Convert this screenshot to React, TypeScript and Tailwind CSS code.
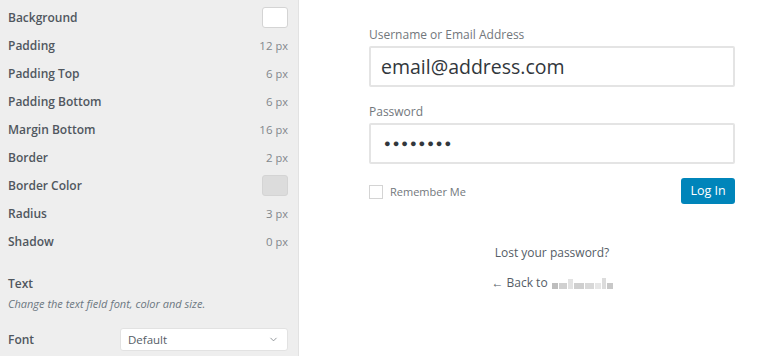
import { ChevronDown } from 'lucide-react';

const rows: { label: string; value?: string; swatch?: string }[] = [
  { label: 'Background', swatch: 'bg-white' },
  { label: 'Padding', value: '12' },
  { label: 'Padding Top', value: '6' },
  { label: 'Padding Bottom', value: '6' },
  { label: 'Margin Bottom', value: '16' },
  { label: 'Border', value: '2' },
  { label: 'Border Color', swatch: 'bg-[#dcdcdc]' },
  { label: 'Radius', value: '3' },
  { label: 'Shadow', value: '0' },
];

function SettingsPanel() {
  return (
    <div className="w-[299px] shrink-0 bg-[#eeeeee] border-r border-[#e2e2e2] pl-2 pr-[10px] pt-[7px]">
      {rows.map((r) => (
        <div key={r.label} className="flex h-[28px] items-start justify-between">
          <span className="text-[12px] font-semibold leading-[21px] text-[#50575e]">{r.label}</span>
          {r.swatch ? (
            <span className={`h-[21px] w-[26px] rounded-[3px] border border-[#d4d4d4] ${r.swatch}`} />
          ) : (
            <span className="text-[11.5px] leading-[21px] text-[#82878c]">
              {r.value} <span className="text-[11px]">px</span>
            </span>
          )}
        </div>
      ))}
      <div className="mt-[17px] text-[12px] font-semibold leading-[16px] text-[#50575e]">Text</div>
      <div className="mt-[4px] text-[11px] italic leading-[16px] text-[#6c7781]">
        Change the text field font, color and size.
      </div>
      <div className="mt-[16px] flex items-center justify-between">
        <span className="text-[12px] font-semibold text-[#50575e]">Font</span>
        <div className="flex h-[23px] w-[168px] items-center justify-between rounded-[3px] border border-[#e2e2e2] bg-white pl-[7px] pr-[8px]">
          <span className="text-[11.5px] text-[#555d66]">Default</span>
          <ChevronDown size={11} strokeWidth={2} className="text-[#8a8f94]" />
        </div>
      </div>
    </div>
  );
}

function LoginForm() {
  return (
    <div className="flex-1 bg-white pl-[70px] pr-[33px] pt-[27px]">
      <label className="block text-[12px] leading-[16px] text-[#72777c]">Username or Email Address</label>
      <div className="mt-[3px] flex h-[41px] items-center rounded-[2px] border-2 border-[#e4e4e4] px-[10px] text-[19.5px] text-[#32373c]">
        email@address.com
      </div>
      <label className="mt-[17px] block text-[12px] leading-[16px] text-[#72777c]">Password</label>
      <div className="mt-[3px] flex h-[41px] items-center rounded-[2px] border-2 border-[#e4e4e4] px-[13px] text-[11px] tracking-[2px] text-[#32373c]">
        ●●●●●●●●
      </div>
      <div className="mt-[14px] flex items-center justify-between">
        <div className="mt-[2px] flex items-center gap-[7px]">
          <span className="h-[14px] w-[14px] border border-[#d4d4d4] bg-white" />
          <span className="text-[11px] text-[#72777c]">Remember Me</span>
        </div>
        <button className="h-[26px] w-[54px] rounded-[3px] bg-[#0085ba] text-[12.5px] text-white">Log In</button>
      </div>
      <div className="mt-[40px] text-center text-[12px] text-[#555d66]">Lost your password?</div>
      <div className="mt-[12px] flex items-center justify-center gap-[4px] text-[12px] text-[#555d66]">
        <span>← Back to</span>
        <span className="flex items-end gap-[1px]">
          <span className="h-[6px] w-[6px] bg-[#bdbdbd]" />
          <span className="h-[6px] w-[8px] bg-[#d0d0d0]" />
          <span className="h-[10px] w-[5px] bg-[#e2e2e2]" />
          <span className="h-[6px] w-[10px] bg-[#cfcfcf]" />
          <span className="h-[6px] w-[9px] bg-[#d8d8d8]" />
          <span className="h-[6px] w-[6px] bg-[#e6e6e6]" />
          <span className="h-[11px] w-[4px] bg-[#dcdcdc]" />
          <span className="h-[6px] w-[6px] bg-[#c8c8c8]" />
        </span>
      </div>
    </div>
  );
}

export default function App() {
  return (
    <div
      className="flex h-[356px] w-[768px] overflow-hidden"
      style={{ fontFamily: '"Open Sans", "Noto Sans", sans-serif' }}
    >
      <SettingsPanel />
      <LoginForm />
    </div>
  );
}
